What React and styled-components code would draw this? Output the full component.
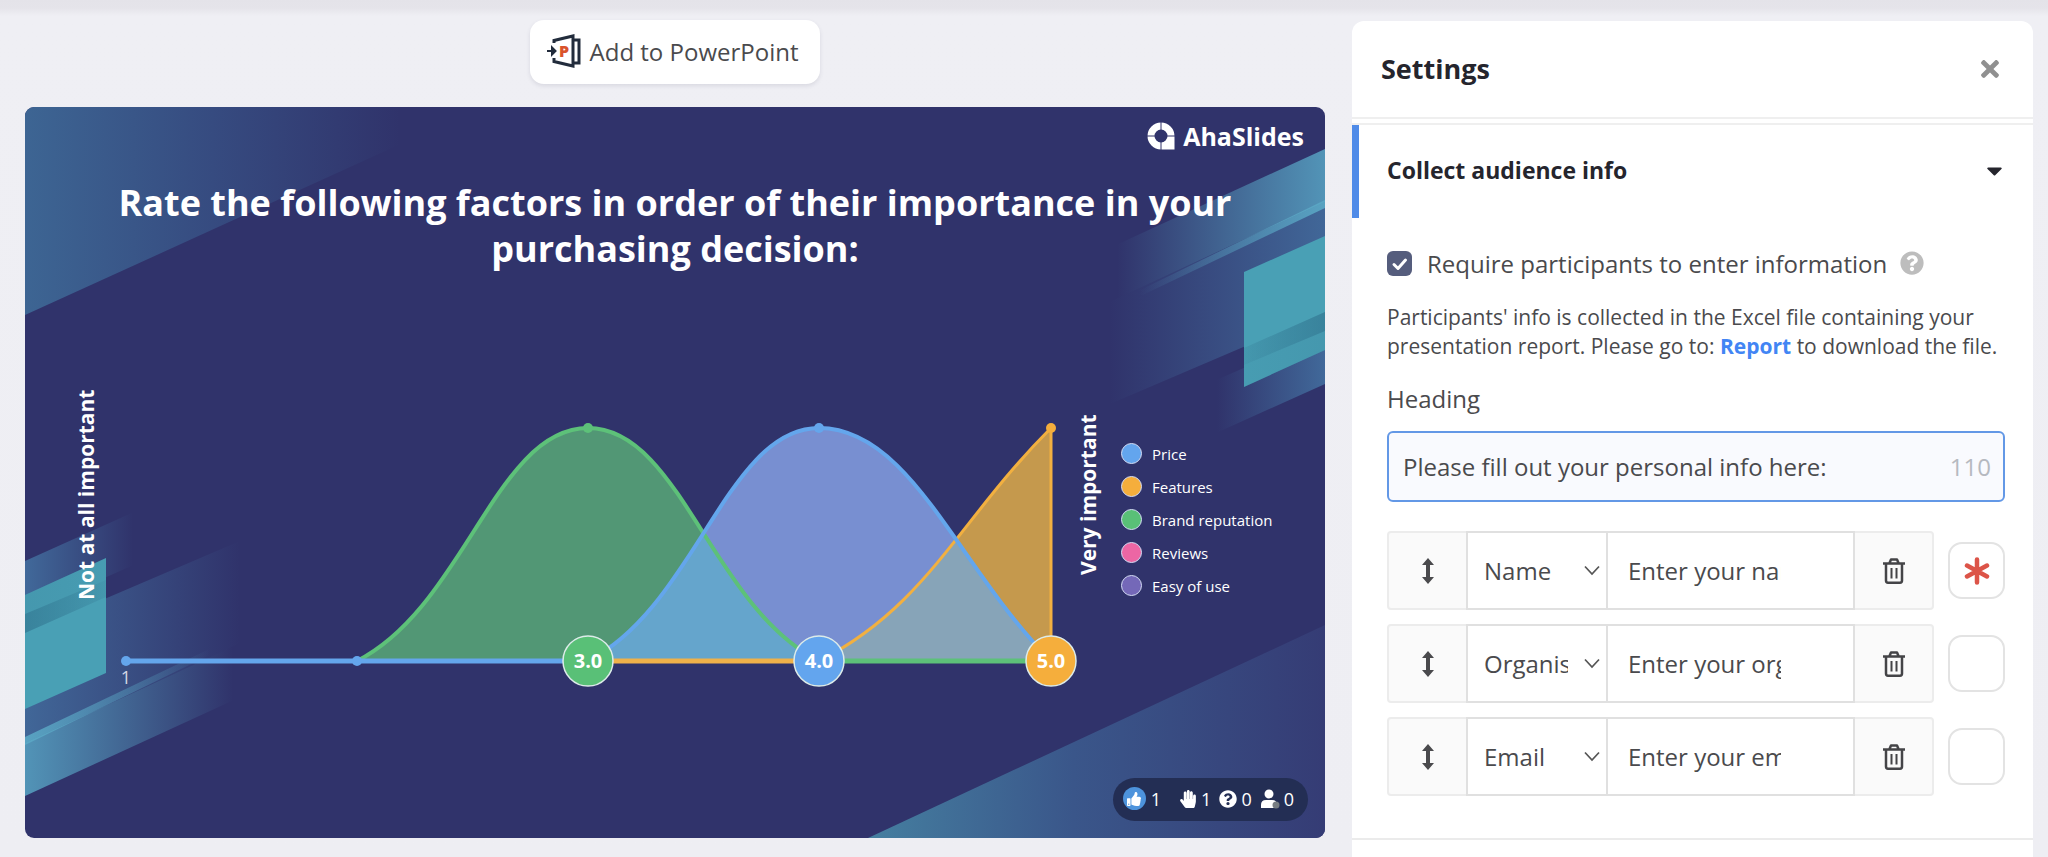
import React from 'react';
import styled, { createGlobalStyle, css } from 'styled-components';
import { FaHandPaper, FaQuestionCircle, FaThumbsUp, FaTimes, FaCaretDown } from 'react-icons/fa';

const GlobalStyle = createGlobalStyle`
  *, *::before, *::after { box-sizing: border-box; }
  body { margin: 0; background: #eeeef3; color: #4a4a4d; font-family: "Open Sans", "Noto Sans", sans-serif; }
  button, input, select { font: inherit; color: inherit; margin: 0; }
  h1, h2, h3, p, ul { margin: 0; padding: 0; }
`;

const Page = styled.div`
  min-height: 100vh;
  display: grid;
  grid-template-columns: minmax(0, 1fr) 681px;
  padding-right: 15px;
  background: linear-gradient(#e4e3e9 0, #e5e4ea 8px, #efeff4 16px, #eeeef3 100%);
`;

/* ---------- Editor column ---------- */

const Editor = styled.main`
  display: flex;
  flex-direction: column;
  align-items: center;
  gap: 23px;
  padding: 20px 27px 18px 25px;
`;

const AddButton = styled.button`
  display: flex;
  align-items: center;
  gap: 9px;
  height: 64px;
  padding: 0 22px 2px 17px;
  border: 0;
  border-radius: 14px;
  background: #fff;
  box-shadow: 0 2px 4px rgba(60, 60, 90, 0.12);
  font-size: 24px;
  white-space: nowrap;
`;

const Slide = styled.section`
  position: relative;
  display: flex;
  flex-direction: column;
  width: 100%;
  aspect-ratio: 1300 / 731;
  border-radius: 9px;
  overflow: hidden;
  background: #30336b;
  color: #fff;
`;

const Backdrop = styled.svg`
  position: absolute;
  inset: 0;
  width: 100%;
  height: 100%;
`;

const SlideHeader = styled.header`
  position: relative;
  display: flex;
  justify-content: flex-end;
  padding: 13px 21px 0;
`;

const Brand = styled.div`
  display: flex;
  align-items: center;
  gap: 8px;
  font-size: 25px;
  font-weight: 700;
  line-height: 32px;
`;

const SlideTitle = styled.h1`
  position: relative;
  padding: 28px 80px 0;
  font-size: 36px;
  font-weight: 700;
  line-height: 46px;
  text-align: center;
`;

const ChartRow = styled.div`
  position: relative;
  display: flex;
  align-items: flex-start;
  padding: 117px 0 0 46px;
`;

const AxisLabel = styled.span`
  flex: none;
  width: 30px;
  height: 212px;
  writing-mode: vertical-rl;
  transform: rotate(180deg);
  font-size: 21px;
  font-weight: 700;
  line-height: 30px;
  text-align: center;
  white-space: nowrap;
`;

const Chart = styled.svg`
  display: block;
  flex: 1;
  min-width: 0;
  overflow: visible;
`;

const Legend = styled.ul`
  flex: none;
  width: 222px;
  padding: 48px 0 0 18px;
  list-style: none;
`;

const LegendItem = styled.li`
  display: flex;
  align-items: center;
  gap: 10px;
  height: 33px;
  font-size: 15px;

  &::before {
    content: "";
    width: 21px;
    height: 21px;
    border: 1px solid #d4dcf4;
    border-radius: 50%;
    background: ${(p) => p.$color};
  }
`;

const SlideFooter = styled.footer`
  position: relative;
  display: flex;
  justify-content: flex-end;
  margin-top: auto;
  padding: 0 17px 17px;
`;

const Reactions = styled.div`
  display: flex;
  align-items: center;
  gap: 8px;
  height: 43px;
  padding: 0 14px 2px 10px;
  border-radius: 22px;
  background: #232e54;
`;

const Reaction = styled.span`
  display: flex;
  align-items: center;
  gap: 4px;
  font-size: 18px;

  &:first-child { gap: 5px; margin-right: 10px; }
`;

const Like = styled.span`
  display: grid;
  place-items: center;
  width: 23px;
  height: 23px;
  border-radius: 50%;
  background: #4d93dc;
`;

/* ---------- Settings panel ---------- */

const Panel = styled.aside`
  margin-top: 21px;
  border-radius: 12px 12px 0 0;
  background: #fff;
  overflow: hidden;
`;

const PanelHeader = styled.header`
  display: flex;
  align-items: center;
  justify-content: space-between;
  height: 98px;
  padding: 0 30px 0 29px;
  border-bottom: 2px solid #efefef;
`;

const PanelTitle = styled.h2`
  color: #25252d;
  font-size: 27px;
  font-weight: 700;
  line-height: 36px;
`;

const IconButton = styled.button`
  display: grid;
  place-items: center;
  padding: 0;
  border: 0;
  background: none;
  color: ${(p) => p.$color || '#4a4a4d'};
`;

const Section = styled.section`
  margin-top: 4px;
  border-top: 2px solid #efefef;
  border-bottom: 2px solid #ebebeb;
  padding-bottom: 42px;
`;

const SectionToggle = styled.button`
  display: flex;
  align-items: center;
  justify-content: space-between;
  width: 100%;
  height: 93px;
  padding: 0 26px 3px 28px;
  border: 0;
  border-left: 7px solid #4f8be8;
  background: #fff;
  color: #25252d;
  font-size: 23px;
  font-weight: 700;
`;

const SectionBody = styled.div`
  padding: 29px 28px 0 35px;
`;

const CheckRow = styled.div`
  display: flex;
  align-items: center;
  gap: 13px;
  height: 32px;
  font-size: 24px;
  white-space: nowrap;
`;

const CheckLabel = styled.label`
  display: flex;
  align-items: center;
  gap: 15px;
`;

const checkMark = "url(\"data:image/svg+xml,%3Csvg xmlns='http://www.w3.org/2000/svg' viewBox='0 0 25 25' fill='none' stroke='white' stroke-width='3' stroke-linecap='round' stroke-linejoin='round'%3E%3Cpath d='M7 13.5l4 4L18.500 9'/%3E%3C/svg%3E\")";

const Checkbox = styled.input`
  appearance: none;
  width: 25px;
  height: 25px;
  border-radius: 6px;
  background: #555d7d;

  &:checked { background-image: ${checkMark}; }
`;

const Note = styled.p`
  margin-top: 24px;
  font-size: 21px;
  line-height: 29px;
`;

const ReportLink = styled.a`
  color: #4285f4;
  font-weight: 700;
  text-decoration: none;
`;

const FieldLabel = styled.label`
  display: block;
  margin-top: 22px;
  font-size: 24px;
  line-height: 32px;
`;

const HeadingField = styled.div`
  display: flex;
  align-items: center;
  height: 71px;
  margin-top: 16px;
  padding: 0 12px 0 14px;
  border: 2px solid #6398e6;
  border-radius: 6px;
  background: #f9fafe;
  font-size: 24px;
`;

const bareInput = css`
  min-width: 0;
  border: 0;
  outline: 0;
  border-radius: 0;
  background: none;
`;

const HeadingInput = styled.input`
  ${bareInput}
  flex: 1;
  padding: 0;
`;

const Counter = styled.span`
  color: #b6b9c0;
`;

const Fields = styled.div`
  display: grid;
  gap: 14px;
  margin-top: 29px;
`;

const FieldRow = styled.div`
  display: flex;
  align-items: center;
  gap: 14px;
`;

const FieldGroup = styled.div`
  flex: 1;
  display: grid;
  grid-template-columns: 77px 142px minmax(0, 1fr) 77px;
  height: 79px;
  border: 2px solid #ececec;
  border-radius: 4px;
  background: #fafafa;
  font-size: 24px;
`;

const TypeCell = styled.div`
  position: relative;
  margin: -2px 0;
  border: 2px solid #e0e0e0;
  background: #fff;

  svg {
    position: absolute;
    top: 32px;
    right: 6px;
    pointer-events: none;
  }
`;

const TypeSelect = styled.select`
  ${bareInput}
  appearance: none;
  width: 100%;
  height: 100%;
  padding: 0 38px 0 16px;
`;

const ValueInput = styled.input`
  ${bareInput}
  height: 79px;
  margin: -2px 0;
  padding: 0 72px 0 20px;
  border: 2px solid #e0e0e0;
  border-left: 0;
  background: #fff;
`;

const RequiredButton = styled.button`
  flex: none;
  display: grid;
  place-items: center;
  width: 57px;
  height: 57px;
  padding: 0;
  border: 2px solid #e3e3e3;
  border-radius: 14px;
  background: #fff;
`;

/* ---------- Icons ---------- */

const PowerPointIcon = () => (
  <svg width="34" height="34" viewBox="0 0 34 34" fill="none" stroke="#222c3c" strokeWidth="3" aria-hidden="true">
    <path d="M7 9V6.500L26 2V32L7 27.500V24" />
    <path d="M26 6h6v23h-6" />
    <path d="M0 17h5M5 13.500L8.500 17L5 20.500z" fill="#222c3c" strokeWidth="2" />
    <text x="12" y="23" fill="#d9532c" stroke="none" fontSize="16" fontWeight="800">P</text>
  </svg>
);

const BrandMark = () => (
  <svg width="28" height="28" viewBox="0 0 28 28" aria-hidden="true">
    <path fill="#fff" fillRule="evenodd" d="M14 0.500A13.500 13.500 0 0 1 27.500 14V27.500H14A13.500 13.500 0 0 1 14 0.500ZM14 7.500A6.500 6.500 0 0 0 14 20.500A6.500 6.500 0 0 0 14 7.500Z" />
    <path stroke="#30336b" strokeWidth="1" d="M14 0V8M0 14H8M14 20V28M20 14H28" />
  </svg>
);

const PersonIcon = () => (
  <svg width="20" height="20" viewBox="0 0 20 20" aria-hidden="true">
    <circle cx="9" cy="5" r="4.500" fill="#fff" />
    <path d="M1 19v-3q0-5 5-5h6q5 0 5 5v3z" fill="#fff" />
    <circle cx="16" cy="16" r="3.500" fill="#777d82" />
  </svg>
);

const MoveIcon = () => (
  <svg width="12" height="26" viewBox="0 0 12 26" fill="#4a4a4d" aria-hidden="true">
    <path d="M6 0L12 7H8V19H12L6 26L0 19H4V7H0z" />
  </svg>
);

const ChevronIcon = () => (
  <svg width="16" height="11" viewBox="0 0 16 11" fill="none" stroke="#555" strokeWidth="1.700" aria-hidden="true">
    <path d="M1 1.500L8 9L15 1.500" />
  </svg>
);

const TrashIcon = () => (
  <svg width="22" height="26" viewBox="0 0 22 26" fill="none" stroke="#444447" strokeWidth="2" strokeLinejoin="round" aria-hidden="true">
    <path strokeWidth="2.500" d="M0 5.500H22M6.500 5L8 1.500H14L15.500 5" />
    <path strokeWidth="2.500" d="M3 6V22.500Q3 24.700 5 24.700H17Q19 24.700 19 22.500V6" />
    <path d="M8.500 10V20.500M13.500 10V20.500" />
  </svg>
);

const AsteriskIcon = () => (
  <svg width="26" height="28" viewBox="0 0 26 28" stroke="#dc5448" strokeWidth="4.500" strokeLinecap="round" aria-hidden="true">
    <path d="M13 2.500V25.500M3 8.500L23 19.500M23 8.500L3 19.500" />
  </svg>
);

/* ---------- Slide artwork ---------- */

const Streaks = () => (
  <g>
    <path fill="url(#bandTop)" d="M1300 42L1078 144V198L1300 95z" />
    <path fill="url(#bandMid)" d="M1300 95L1078 198V300L1300 205z" />
    <path fill="url(#bandEdge)" d="M1300 93L1105 188V194L1300 101z" />
    <path fill="url(#bandLow)" d="M1300 225L1180 278V331L1300 277z" />
    <path fill="#49a0b5" d="M1300 129L1219 165V280L1300 243z" />
    <path fill="url(#tealShade)" d="M1300 205L1219 241V280L1300 243z" />
    <path fill="url(#tealWedge)" d="M1300 205L1219 241V258L1300 224z" />
  </g>
);

const fade = (id, color, from, opacity = 1) => (
  <linearGradient id={id} gradientUnits="userSpaceOnUse" x1={from} x2="1300" y1="0" y2="0">
    <stop offset="0" stopColor={color} stopOpacity="0" />
    <stop offset="1" stopColor={color} stopOpacity={opacity} />
  </linearGradient>
);

const SlideBackdrop = () => (
  <Backdrop viewBox="0 0 1300 731" preserveAspectRatio="none" aria-hidden="true">
    <defs>
      {fade('bandTop', '#5294b7', 1092)}
      {fade('bandMid', '#416798', 1085)}
      {fade('bandEdge', '#5ba9c6', 1115, 0.9)}
      {fade('bandLow', '#41699a', 1192)}
      {fade('tealShade', '#397f9a', 1150, 0.25)}
      {fade('tealWedge', '#357c96', 1200, 0.75)}
      <linearGradient id="corner" gradientUnits="userSpaceOnUse" x1="0" x2="375" y1="0" y2="0">
        <stop offset="0" stopColor="#3d6593" />
        <stop offset="0.5" stopColor="#364b80" />
        <stop offset="1" stopColor="#30336b" />
      </linearGradient>
      <linearGradient id="cornerLow" gradientUnits="userSpaceOnUse" x1="843" x2="1300" y1="0" y2="0">
        <stop offset="0" stopColor="#457fa0" />
        <stop offset="0.45" stopColor="#3a568a" />
        <stop offset="1" stopColor="#353c75" />
      </linearGradient>
    </defs>
    <path fill="url(#corner)" d="M0 0H457L0 208z" />
    <path fill="url(#cornerLow)" d="M843 731L1300 518V731z" />
    <Streaks />
    <g transform="rotate(180 650 365.500)">
      <Streaks />
    </g>
  </Backdrop>
);

const GREEN = 'M256 272C364 217 395 39 487 39C579 39 610 217 718 272';
const BLUE = 'M487 272C595 217 626 39 718 39C810 39 857 179 950 272';
const ORANGE = 'M718 272C826 217 857 132 950 39';

const SCORES = [
  { x: 487, value: '3.0', color: '#59c077' },
  { x: 718, value: '4.0', color: '#63a5ee' },
  { x: 950, value: '5.0', color: '#f5ae3c' },
];

const RatingChart = () => (
  <Chart viewBox="0 0 972 300" role="img" aria-label="Average rating of each factor from 1 to 5">
    <defs>
      <clipPath id="blueArea"><path d={`${BLUE}z`} /></clipPath>
    </defs>
    <path d={`${GREEN}z`} fill="#529775" />
    <path d={`${ORANGE}V272z`} fill="#c5994d" />
    <path d={`${BLUE}z`} fill="#788fd1" />
    <g clipPath="url(#blueArea)">
      <path d={`${GREEN}z`} fill="#65a5cc" />
      <path d={`${ORANGE}V272z`} fill="#87a4b8" />
    </g>
    <g fill="none" strokeWidth="4">
      <path d={GREEN} stroke="#5dc179" />
      <path d={`${ORANGE}V272`} stroke="#f2b040" strokeWidth="3" />
      <path d={BLUE} stroke="#64a6ec" />
      <path d="M25 272H487" stroke="#64a6ec" strokeWidth="5" />
      <path d="M487 272H718" stroke="#efb14a" strokeWidth="5" />
      <path d="M718 272H950" stroke="#5dc179" strokeWidth="5" />
    </g>
    <g fill="#64a6ec">
      <circle cx="25" cy="272" r="5" />
      <circle cx="256" cy="272" r="5" />
      <circle cx="718" cy="39" r="5" />
      <circle cx="487" cy="39" r="5" fill="#5dc179" />
      <circle cx="950" cy="39" r="5" fill="#f5ae3c" />
    </g>
    <text x="25" y="295" fill="#d5d7e6" fontSize="18" textAnchor="middle">1</text>
    {SCORES.map(({ x, value, color }) => (
      <g key={value}>
        <circle cx={x} cy="272" r="25" fill={color} stroke="#dcebe9" strokeWidth="1.500" />
        <text x={x} y="279" fill="#fff" fontSize="20" fontWeight="700" textAnchor="middle">{value}</text>
      </g>
    ))}
  </Chart>
);

const LEGEND = [
  ['Price', '#63a5ee'],
  ['Features', '#f5ae3c'],
  ['Brand reputation', '#59c077'],
  ['Reviews', '#ec66a4'],
  ['Easy of use', '#7468b8'],
];

const FIELDS = [
  { type: 'Name', value: 'Enter your name', required: true },
  { type: 'Organisation', value: 'Enter your organisation', required: false },
  { type: 'Email', value: 'Enter your email', required: false },
];

const AudienceField = ({ type, value, required }) => (
  <FieldRow>
    <FieldGroup>
      <IconButton type="button" aria-label={`Move ${type}`}><MoveIcon /></IconButton>
      <TypeCell>
        <TypeSelect aria-label="Field type" defaultValue={type}>
          {FIELDS.map((f) => <option key={f.type}>{f.type}</option>)}
        </TypeSelect>
        <ChevronIcon />
      </TypeCell>
      <ValueInput aria-label={`${type} prompt`} defaultValue={value} />
      <IconButton type="button" aria-label={`Delete ${type}`}><TrashIcon /></IconButton>
    </FieldGroup>
    <RequiredButton type="button" aria-label={`${type} required`} aria-pressed={required}>
      {required && <AsteriskIcon />}
    </RequiredButton>
  </FieldRow>
);

export default function App() {
  return (
    <>
      <GlobalStyle />
      <Page>
        <Editor>
          <AddButton type="button"><PowerPointIcon />Add to PowerPoint</AddButton>
          <Slide>
            <SlideBackdrop />
            <SlideHeader><Brand><BrandMark />AhaSlides</Brand></SlideHeader>
            <SlideTitle>Rate the following factors in order of their importance in your purchasing decision:</SlideTitle>
            <ChartRow>
              <AxisLabel>Not at all important</AxisLabel>
              <RatingChart />
              <AxisLabel>Very important</AxisLabel>
              <Legend>
                {LEGEND.map(([name, color]) => <LegendItem key={name} $color={color}>{name}</LegendItem>)}
              </Legend>
            </ChartRow>
            <SlideFooter>
              <Reactions>
                <Reaction><Like><FaThumbsUp size={14} /></Like>1</Reaction>
                <Reaction><FaHandPaper size={18} />1</Reaction>
                <Reaction><FaQuestionCircle size={18} />0</Reaction>
                <Reaction><PersonIcon />0</Reaction>
              </Reactions>
            </SlideFooter>
          </Slide>
        </Editor>
        <Panel>
          <PanelHeader>
            <PanelTitle>Settings</PanelTitle>
            <IconButton type="button" aria-label="Close" $color="#909090"><FaTimes size={26} /></IconButton>
          </PanelHeader>
          <Section>
            <SectionToggle type="button" aria-expanded="true">
              Collect audience info
              <FaCaretDown size={25} />
            </SectionToggle>
            <SectionBody>
              <CheckRow>
                <CheckLabel>
                  <Checkbox type="checkbox" defaultChecked />
                  Require participants to enter information
                </CheckLabel>
                <IconButton type="button" aria-label="Help" $color="#bdbdbd"><FaQuestionCircle size={24} /></IconButton>
              </CheckRow>
              <Note>
                Participants' info is collected in the Excel file containing your presentation report. Please go to:{' '}
                <ReportLink href="#report">Report</ReportLink> to download the file.
              </Note>
              <FieldLabel htmlFor="form-heading">Heading</FieldLabel>
              <HeadingField>
                <HeadingInput id="form-heading" defaultValue="Please fill out your personal info here:" />
                <Counter>110</Counter>
              </HeadingField>
              <Fields>
                {FIELDS.map((f) => <AudienceField key={f.type} {...f} />)}
              </Fields>
            </SectionBody>
          </Section>
        </Panel>
      </Page>
    </>
  );
}
